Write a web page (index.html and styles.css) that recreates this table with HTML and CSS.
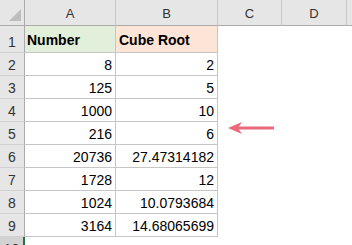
FILE: index.html
```html
<!DOCTYPE html>
<html lang="en">

<head>
    <meta charset="UTF-8">
    <title>Cube Root</title>
    <link rel="stylesheet" href="styles.css">
</head>

<body>
    <div class="sheet">
        <!-- column headers -->
        <div class="corner"><span class="tri"></span></div>
        <div class="col-hd">A</div>
        <div class="col-hd">B</div>
        <div class="col-hd">C</div>
        <div class="col-hd">D</div>
        <div class="col-hd last"></div>

        <!-- row 1 -->
        <div class="row-hd">1</div>
        <div class="cell title green">Number</div>
        <div class="cell title peach">Cube Root</div>
        <div class="blank"></div><div class="blank"></div><div class="blank"></div>

        <div class="row-hd">2</div>
        <div class="cell">8</div><div class="cell">2</div>
        <div class="blank"></div><div class="blank"></div><div class="blank"></div>

        <div class="row-hd">3</div>
        <div class="cell">125</div><div class="cell">5</div>
        <div class="blank"></div><div class="blank"></div><div class="blank"></div>

        <div class="row-hd">4</div>
        <div class="cell">1000</div><div class="cell">10</div>
        <div class="blank"></div><div class="blank"></div><div class="blank"></div>

        <div class="row-hd">5</div>
        <div class="cell">216</div><div class="cell">6</div>
        <div class="blank"></div><div class="blank"></div><div class="blank"></div>

        <div class="row-hd">6</div>
        <div class="cell">20736</div><div class="cell">27.47314182</div>
        <div class="blank"></div><div class="blank"></div><div class="blank"></div>

        <div class="row-hd">7</div>
        <div class="cell">1728</div><div class="cell">12</div>
        <div class="blank"></div><div class="blank"></div><div class="blank"></div>

        <div class="row-hd">8</div>
        <div class="cell">1024</div><div class="cell">10.0793684</div>
        <div class="blank"></div><div class="blank"></div><div class="blank"></div>

        <div class="row-hd">9</div>
        <div class="cell">3164</div><div class="cell">14.68065699</div>
        <div class="blank"></div><div class="blank"></div><div class="blank"></div>

        <div class="row-hd selected">10</div>
        <div class="blank active"></div>
        <div class="blank"></div><div class="blank"></div><div class="blank"></div><div class="blank"></div>

        <!-- pointer arrow -->
        <svg class="arrow" width="50" height="14" viewBox="0 0 50 14">
            <path d="M10 5.5 H46 V8.5 H10 Z" fill="#ea6a7b" />
            <path d="M0 7 L14 1 L10 7 L14 13 Z" fill="#ea6a7b" />
        </svg>
    </div>
</body>

</html>
```

FILE: styles.css
```css
body {
    margin: 0;
    background-color: white;
    font-family: "Liberation Sans", Arial, sans-serif;
}

.sheet {
    position: relative;
    display: grid;
    grid-template-columns: 25px 91px 102px 64px 65px 1fr;
    grid-template-rows: 26px 27px repeat(8, 23px) 1fr;
    width: 352px;
    height: 245px;
    overflow: hidden;
}

.corner {
    position: relative;
    background-color: #e6e6e6;
    border-right: 1px solid #ababab;
    border-bottom: 1px solid #ababab;
    box-sizing: border-box;
}

.tri {
    position: absolute;
    left: 9px;
    top: 9px;
    width: 0;
    height: 0;
    border-left: 12px solid transparent;
    border-bottom: 12px solid #bdbdbd;
}

.col-hd {
    background-color: #e6e6e6;
    border-right: 1px solid #c8c8c8;
    border-bottom: 1px solid #ababab;
    box-sizing: border-box;
    display: flex;
    align-items: center;
    justify-content: center;
    font-size: 13px;
    color: #333;
    padding-top: 1px;
}

.col-hd.last {
    border-right: none;
}

.row-hd {
    background-color: #e6e6e6;
    border-right: 1px solid #ababab;
    border-bottom: 1px solid #d0d0d0;
    box-sizing: border-box;
    display: flex;
    align-items: flex-end;
    justify-content: center;
    padding-bottom: 2px;
    font-size: 14px;
    color: #333;
}

.row-hd.selected {
    background-color: #d2d2d2;
    border-right: 2px solid #217346;
    align-items: flex-start;
    padding-top: 4px;
}

.cell {
    border-right: 1px solid #c6c6c6;
    border-bottom: 1px solid #c6c6c6;
    box-sizing: border-box;
    display: flex;
    align-items: flex-end;
    justify-content: flex-end;
    padding: 0 3px 2px 0;
    font-size: 14px;
    line-height: 16px;
    color: #000;
}

.title {
    justify-content: flex-start;
    padding: 0 0 4px 2px;
    font-weight: bold;
}

.green {
    background-color: #e2efda;
}

.peach {
    background-color: #fce4d6;
    padding-left: 3px;
}

.blank {
    background-color: white;
}

.arrow {
    position: absolute;
    left: 228px;
    top: 121px;
}
```
